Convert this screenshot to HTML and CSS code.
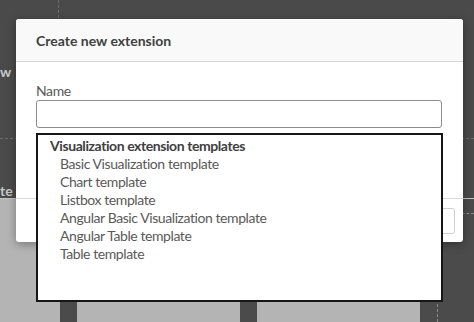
FILE: index.html
```html
<!DOCTYPE html>
<html>
<head>
<meta charset="utf-8">
<link rel="stylesheet" href="styles.css">
</head>
<body>
<div class="app">
  <div class="top">
    <div class="row1">
      <div class="col-a"><span class="label">w</span></div>
      <div class="col-b"></div>
    </div>
    <div class="row2">
      <span class="label">te</span>
    </div>
  </div>
  <div class="bottom">
    <div class="lt"></div>
    <div class="dk"></div>
    <div class="lt"></div>
    <div class="dk"></div>
    <div class="lt"></div>
    <div class="dk dk-end">
      <div class="dk-inner"><div class="hdash"></div></div>
    </div>
  </div>
</div>

<div class="modal">
  <div class="modal-header">Create new extension</div>
  <div class="modal-body">
    <div class="field-label">Name</div>
    <div class="input"></div>
  </div>
  <div class="modal-footer">
    <div class="btn"></div>
  </div>
</div>

<div class="dropdown">
  <div class="group">Visualization extension templates</div>
  <div class="item">Basic Visualization template</div>
  <div class="item">Chart template</div>
  <div class="item">Listbox template</div>
  <div class="item">Angular Basic Visualization template</div>
  <div class="item">Angular Table template</div>
  <div class="item">Table template</div>
</div>
</body>
</html>
```
FILE: styles.css
```css
* { box-sizing: border-box; }
html, body { margin: 0; padding: 0; }
body {
  width: 474px;
  height: 322px;
  overflow: hidden;
  position: relative;
  font-family: Lato, "Noto Sans", sans-serif;
  background: #4a4a4a;
}
.app {
  display: grid;
  grid-template-rows: 198px 1fr;
  height: 322px;
}
.top {
  background: #4a4a4a;
  display: flex;
  flex-direction: column;
}
.row1 {
  height: 140px;
  display: flex;
  border-bottom: 1px dashed #6e6e6e;
}
.col-a { width: 58px; padding-top: 65px; }
.col-b { flex: 1; border-left: 1px dashed #6e6e6e; }
.row2 {
  flex: 1;
  padding-top: 45px;
}
.label {
  color: #c8c8c8;
  font-weight: 700;
  font-size: 14px;
  line-height: 14px;
  display: block;
}
.bottom {
  background: #b4b4b4;
  border-top: 1px solid #c4c4c4;
  display: grid;
  grid-template-columns: 60px 17px 163px 17px 163px 1fr;
}
.lt { background: #b4b4b4; }
.dk { background: #4b4b4b; }
.dk-end { padding-left: 17px; }
.dk-inner {
  height: 100%;
  border-left: 1px dashed #8a8a8a;
  padding-top: 14px;
}
.hdash { border-top: 1px dashed #8a8a8a; }

.modal {
  position: absolute;
  left: 16px;
  top: 19px;
  width: 447px;
  height: 223px;
  background: #fff;
  border-radius: 3px;
  box-shadow: 0 2px 10px rgba(0,0,0,0.35);
  display: flex;
  flex-direction: column;
  overflow: hidden;
}
.modal-header {
  height: 43px;
  background: #f9f9f9;
  border-bottom: 1px solid #d6d6d6;
  padding-left: 20px;
  display: flex;
  align-items: center;
  font-size: 14px;
  font-weight: 700;
  color: #404040;
}
.modal-body {
  flex: 1;
  padding: 20px 20px 0 20px;
}
.field-label {
  font-size: 14px;
  line-height: 18px;
  color: #595959;
  letter-spacing: -0.4px;
}
.input {
  width: 406px;
  height: 28px;
  border: 1px solid #8c8c8c;
  border-radius: 3px;
  background: #fff;
}
.modal-footer {
  height: 44px;
  border-top: 1px solid #d9d9d9;
  display: flex;
  justify-content: flex-end;
  padding: 9px 8px 0 0;
}
.btn {
  width: 60px;
  height: 26px;
  border: 1px solid #cfcfcf;
  border-radius: 3px;
}

.dropdown {
  position: absolute;
  left: 36px;
  top: 133px;
  width: 407px;
  height: 169px;
  background: #fff;
  border: 2px solid #161616;
  padding-top: 2px;
  font-size: 14px;
  line-height: 18px;
  letter-spacing: -0.42px;
}
.group {
  padding-left: 12px;
  font-weight: 700;
  color: #404040;
}
.item {
  padding-left: 22px;
  color: #595959;
}
```
